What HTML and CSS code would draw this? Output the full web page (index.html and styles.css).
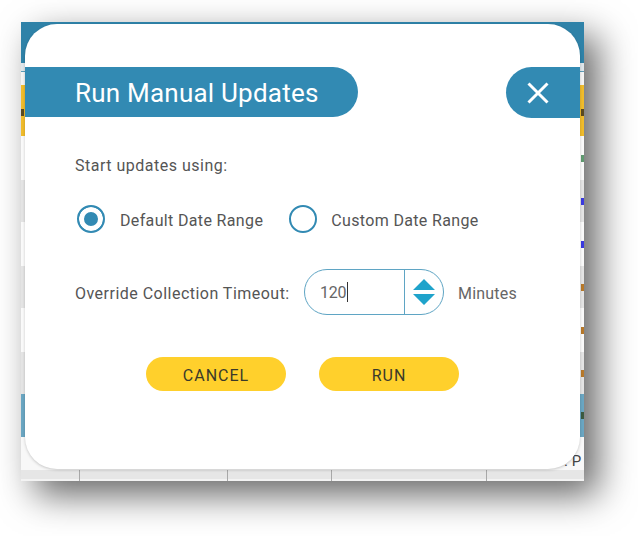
FILE: index.html
```html
<!DOCTYPE html>
<html lang="en">
<head>
    <meta charset="UTF-8">
    <title>Run Manual Updates</title>
    <link rel="stylesheet" href="styles.css">
</head>
<body>

<div class="shot">
    <!-- page behind the dialog, only the edges show -->
    <div class="bg-top"></div>
    <div class="bg-row bg-sub"></div>
    <div class="bg-row bg-yellow"><span class="mark mark-ink"></span><span class="mark mark-ink"></span></div>
    <div class="bg-row bg-plain"><span></span><span class="mark mark-green"></span></div>
    <div class="bg-row bg-gray"><span></span><span class="mark mark-blue"></span></div>
    <div class="bg-row bg-plain"><span></span><span class="mark mark-blue"></span></div>
    <div class="bg-row bg-gray"><span></span><span class="mark mark-brown"></span></div>
    <div class="bg-row bg-plain"><span></span><span class="mark mark-brown"></span></div>
    <div class="bg-row bg-gray"><span></span><span class="mark mark-brown"></span></div>
    <div class="bg-row bg-teal"><span></span><span class="mark mark-dark"></span></div>
    <div class="bg-row bg-last"><span></span><span class="edge-p">. P</span></div>
    <div class="bg-foot">
        <span class="cell cell-a"></span>
        <span class="cell cell-b"></span>
        <span class="cell cell-c"></span>
        <span class="cell cell-d"></span>
    </div>

    <div class="dialog">
        <div class="dialog-head">
            <h1 class="title">Run Manual Updates</h1>
            <div class="close">
                <svg width="24" height="24" viewBox="0 0 24 24">
                    <path d="M2.5 2.5 L21.5 21.5 M21.5 2.5 L2.5 21.5" stroke="#fff" stroke-width="3" fill="none"/>
                </svg>
            </div>
        </div>

        <p class="intro">Start updates using:</p>

        <div class="radios">
            <span class="radio radio-on"></span>
            <span class="radio-label label-default">Default Date Range</span>
            <span class="radio"></span>
            <span class="radio-label">Custom Date Range</span>
        </div>

        <div class="timeout">
            <span class="timeout-label">Override Collection Timeout:</span>
            <div class="spinner">
                <div class="spinner-value">120<span class="caret"></span></div>
                <div class="spinner-arrows">
                    <svg width="22" height="26" viewBox="0 0 22 26">
                        <path d="M11 0 L22 11 L0 11 Z M0 15 L22 15 L11 26 Z" fill="#1fa3cb"/>
                    </svg>
                </div>
            </div>
            <span class="timeout-unit">Minutes</span>
        </div>

        <div class="actions">
            <button type="button" class="btn">CANCEL</button>
            <button type="button" class="btn">RUN</button>
        </div>
    </div>
</div>

</body>
</html>
```

FILE: styles.css
```css
html, body {
    height: 536px;
}
body {
    margin: 0;
    padding-top: 22px;
    box-sizing: border-box;
    background-color: #fff;
    font-family: Roboto, "Liberation Sans", sans-serif;
}
.shot {
    position: relative;
    width: 563px;
    height: 459px;
    margin-left: 21px;
    background-color: #fff;
    box-shadow: 14px 14px 34px rgba(0, 0, 0, 0.6);
    overflow: hidden;
}
.bg-top {
    height: 41px;
    background-color: #2f82a8;
}
.bg-row {
    display: flex;
    justify-content: space-between;
    align-items: center;
    overflow: hidden;
    font-size: 13px;
    color: #333;
}
.bg-sub {
    height: 22px;
    box-sizing: border-box;
    background-color: #f4f4f4;
    border-top: 8px solid #dfe6ea;
    box-shadow: inset 0 1px 0 #5c9cb8;
}
.bg-yellow {
    height: 51px;
    padding-top: 4px;
    box-sizing: border-box;
    background-color: #f0bc2c;
}
.bg-plain {
    height: 44px;
    background-color: #fafafa;
}
.bg-gray {
    height: 42px;
    background-color: #e4e4e4;
}
.bg-teal {
    height: 43px;
    background-color: #6aa6c2;
}
.bg-last {
    height: 33px;
    align-items: flex-end;
    background-color: #f8f8f8;
}
.bg-foot {
    position: relative;
    height: 12px;
    box-sizing: border-box;
    background-color: #e6e6e6;
    border-bottom: 3px solid #f3f3f3;
}
.cell {
    position: absolute;
    top: 0;
    bottom: -2px;
    width: 1px;
    background-color: #a8a8a8;
}
.cell-a { left: 58px; }
.cell-b { left: 206px; }
.cell-c { left: 310px; }
.cell-d { left: 465px; }
.edge-p {
    width: 20px;
    font-size: 15px;
    white-space: nowrap;
    color: #444;
}
.mark {
    width: 3px;
    height: 7px;
}
.mark-ink { background-color: #5a4a20; }
.mark-green { background-color: #5f9a70; }
.mark-blue { background-color: #3a3ae0; }
.mark-brown { background-color: #b8792a; }
.mark-dark { background-color: #3c5a40; }

.dialog {
    position: absolute;
    top: 2px;
    left: 4px;
    width: 555px;
    height: 445px;
    background-color: #fff;
    border-radius: 32px;
    box-shadow: 0 1px 3px rgba(0, 0, 0, 0.2);
    overflow: hidden;
}
.dialog-head {
    display: flex;
    justify-content: space-between;
    align-items: flex-start;
    margin-top: 43px;
}
.title {
    width: 283px;
    height: 50px;
    margin: 0;
    padding-left: 50px;
    background-color: #328ab3;
    border-radius: 0 25px 25px 0;
    color: #fff;
    font-size: 26px;
    font-weight: 400;
    letter-spacing: 0.22px;
    line-height: 53px;
    white-space: nowrap;
}
.close {
    display: flex;
    align-items: center;
    width: 54px;
    height: 51px;
    padding-left: 20px;
    background-color: #328ab3;
    border-radius: 26px 0 0 26px;
}
.intro {
    margin: 37px 0 0 50px;
    font-size: 16px;
    line-height: 21px;
    letter-spacing: 0.5px;
    color: #555;
}
.radios {
    display: flex;
    align-items: center;
    margin: 29px 0 0 52px;
    height: 28px;
    font-size: 16px;
    letter-spacing: 0.35px;
    color: #555;
}
.radio {
    box-sizing: border-box;
    width: 28px;
    height: 28px;
    border: 2.5px solid #328ab3;
    border-radius: 50%;
}
.radio-on {
    background-color: #328ab3;
    box-shadow: inset 0 0 0 5px #fff;
}
.radio-label {
    margin-left: 14px;
    padding-top: 3px;
}
.label-default {
    margin-right: 26px;
    margin-left: 15px;
}
.timeout {
    display: flex;
    align-items: center;
    margin: 36px 0 0 50px;
    font-size: 16px;
    letter-spacing: 0.48px;
    color: #555;
}
.timeout-label {
    width: 229px;
    padding-top: 2px;
    white-space: nowrap;
}
.spinner {
    display: flex;
    box-sizing: border-box;
    width: 140px;
    height: 46px;
    border: 1.5px solid #5fa5c4;
    border-radius: 23px;
}
.spinner-value {
    display: flex;
    align-items: center;
    flex: 1;
    padding-left: 15px;
    letter-spacing: -0.3px;
    font-size: 16px;
    color: #666;
}
.caret {
    width: 1px;
    height: 20px;
    margin-left: 1px;
    background-color: #333;
}
.spinner-arrows {
    display: flex;
    align-items: center;
    justify-content: center;
    width: 38px;
    border-left: 1.5px solid #5fa5c4;
}
.timeout-unit {
    margin-left: 14px;
    padding-top: 2px;
    letter-spacing: 0.2px;
    color: #666;
}
.actions {
    display: flex;
    gap: 33px;
    margin: 42px 0 0 121px;
}
.btn {
    width: 140px;
    height: 34px;
    padding: 2px 0 0;
    background-color: #ffd02c;
    border: none;
    border-radius: 17px;
    color: #3a3a2a;
    font-family: Roboto, "Liberation Sans", sans-serif;
    font-size: 16px;
    letter-spacing: 1px;
}
```
